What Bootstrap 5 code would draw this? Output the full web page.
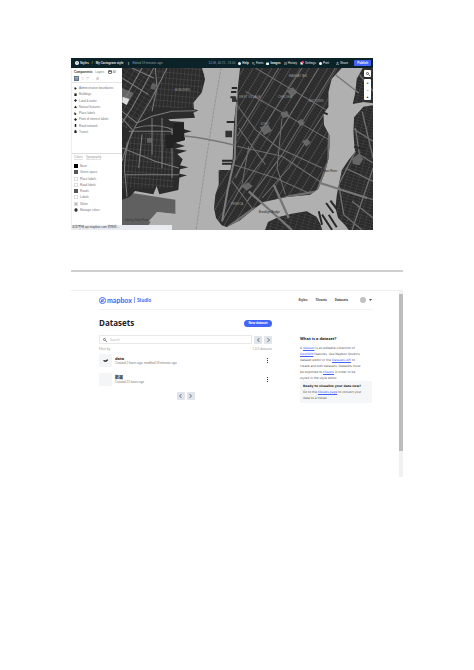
<!DOCTYPE html>
<html lang="en">
<head>
<meta charset="utf-8">
<meta name="viewport" content="width=device-width, initial-scale=1">
<title>Mapbox Studio</title>
<link href="https://cdn.jsdelivr.net/npm/bootstrap@5.3.0/dist/css/bootstrap.min.css" rel="stylesheet">
<style>
body{font-family:"Liberation Sans","Noto Sans CJK SC",sans-serif;font-size:3px;line-height:4px;color:#333;background:#fff}
.page{padding:58px 71px}
svg{display:block;flex:none}
button,input{font-family:inherit;font-size:3px;line-height:4px;border:0;padding:0;margin:0;background:none;color:inherit}
a{color:inherit;text-decoration:none}
.editor{width:91%}
.topbar{height:10px;background:#0b2229;color:#e4eaec;padding:0 2px 0 4px;white-space:nowrap}
.topbar .muted{color:#8fa3a9}
.topbar button,.topbar a{gap:1px}
.tools{gap:3px}
.publish{background:#4264fb!important;color:#fff;border-radius:1px;width:17px;height:6px;font-weight:bold;margin-left:3px!important}
.side{width:51px;flex:none;border-left:1px solid #eee;color:#777;background:#fff}
.tabs{height:7px;padding:0 2px;gap:3px;white-space:nowrap}
.tabs button:first-child{color:#333;font-weight:bold}
.tabs button:last-child{gap:1px}
.filters{height:8px;padding:0 2px;gap:2px;border-bottom:1px solid #e6e6e6}
.filters button{width:3px;height:5px}
.filters .on{width:5px;background:#607888;color:#fff}
.rows{height:50px;padding:0 2px;margin:2px 0 0}
.rows li{gap:2px;white-space:nowrap}
.layers{margin-bottom:18px}
.colours{border-top:1px solid #ddd;padding:0 2px;height:8px;gap:3px;color:#999}
.colours span{border-bottom:1px solid #e2e2e2}
.swatch{width:4px;height:4px;border:1px solid #ddd;flex:none}
.s1,.s2,.s5{border:0}.s1{background:#000}.s2,.s5{background:#555}.s7{background:#bbb}
.mapbox{min-width:0;height:162px;background:#b0b0b0}
.mapbox>svg{width:100%;height:100%}
.mapctl{right:2px;top:2px;width:7px;gap:2px}
.mapctl>*{background:#fff;border-radius:1px}
.mapctl button{height:7px;font-weight:bold;color:#222}
.status{left:0;bottom:0;width:101px;height:5px;background:#e9ebf1;color:#444;padding:0 1px;line-height:5px}
.rule{height:2px;background:#cfcfcf;margin:40px 0 18px}
.studio{border-top:1px solid #f0f0f0;height:187px;font-family:"Open Sans","Noto Sans CJK SC",sans-serif}
.wrapx{padding:0 27px 0 28px}
.head{height:19px;border-bottom:1px solid #f3f3f3}
.brand{color:#4264fb;font-family:Lato,sans-serif;font-size:7px;line-height:8px;font-weight:bold;gap:1px}
.brand .sub{font-size:5px;border-left:1px solid #8fa0f2;padding-left:2px;margin-left:1px;line-height:6px}
.links{gap:8px;font-weight:bold;color:#444}
.avatar{width:6px;height:6px;border-radius:50%;background:#c2c2c2;margin-left:4px}
.user{gap:3px}
.split{gap:28px}
.listcol{flex:1 1 0;min-width:0}
.infocol{width:72px;flex:none;padding-top:26px;font-family:"DejaVu Sans",sans-serif;color:#555}
h1{font-size:8px;line-height:10px;font-weight:700;color:#1b2028;margin:0}
.newbtn{background:#4264fb!important;color:#fff;border-radius:4px;width:28px;height:7px;font-weight:bold}
.toprow{padding-top:8px;height:18px}
.searchrow{margin-top:7px;gap:2px}
.searchbox{border:1px solid #e8e8e8;border-radius:1px;height:9px;padding:0 3px;gap:3px}
.searchbox input{outline:0;width:100%}
.searchbox input::placeholder{color:#aaa;opacity:1}
.sq{width:8px;height:8px;background:#dfe5eb!important;border-radius:1px;color:#5c6670;display:grid;place-items:center}
.meta{color:#888;height:10px;padding-top:3px}
.item{height:13px;gap:3px;margin-bottom:6px;padding-right:2px}
.thumb{width:13px;height:13px;background:#f4f5f7;border-radius:1px;display:grid;place-items:center}
.item .name{font-size:4px;line-height:5px;font-weight:bold;color:#222}
.item p{color:#777;font-family:"Liberation Sans",sans-serif}
.pager{gap:2px}
h2{font-family:"Open Sans",sans-serif;font-size:4px;line-height:5px;font-weight:700;color:#222;margin:0 0 4px}
.infocol p{margin:0;line-height:6px;white-space:nowrap}
.infocol a{color:#4264fb;text-decoration:underline}
.note{background:#f5f6f7;padding:2px 3px;margin:0}
.note b{color:#222}
.scroll{width:4px;background:#f1f1f1;flex:none;padding:3px 0 26px}
.scroll div{width:4px;background:#bdbdbd}
</style>
</head>
<body>
<main class="page">
<section class="editor">
<header class="topbar d-flex align-items-center justify-content-between">
  <div class="d-flex align-items-center tools">
    <a href="#" class="d-flex align-items-center"><svg width="4" height="4" viewBox="0 0 8 8"><circle cx="4" cy="4" r="4" fill="#fff"/><path d="M3 5V3.500L5 2.500 5.500 4Z" fill="#0b2229"/></svg><b>Styles</b></a>
    <span>/</span><b>My Cartogram style</b><b>⋮</b><span class="muted">Edited 19 minutes ago</span>
  </div>
  <div class="d-flex align-items-center tools">
    <span class="muted">12.09, 40.72, -74.00</span>
    <button class="d-flex align-items-center"><svg width="3" height="3" viewBox="0 0 8 8"><circle cx="4" cy="4" r="4" fill="#fff"/></svg><b>Help</b></button>
    <button class="d-flex align-items-center"><svg width="3" height="3" viewBox="0 0 8 8" fill="none" stroke="#fff"><circle cx="3" cy="3" r="2.500"/><path d="M5 5l3 3"/></svg>Fonts</button>
    <button class="d-flex align-items-center"><svg width="3" height="3" viewBox="0 0 8 8"><rect y="1" width="8" height="7" rx="2" fill="#fff"/></svg><b>Images</b></button>
    <button class="d-flex align-items-center"><svg width="3" height="3" viewBox="0 0 8 8" fill="none" stroke="#fff"><circle cx="4" cy="4" r="3.500"/><path d="M4 2v2h2"/></svg>History</button>
    <button class="d-flex align-items-center"><svg width="4" height="4" viewBox="0 0 8 8"><path d="M1 2h5v5H1z" fill="#fff"/><circle cx="5.500" cy="2.500" r="2.500" fill="#f04468"/></svg>Settings</button>
    <button class="d-flex align-items-center"><svg width="3" height="3" viewBox="0 0 8 8"><circle cx="4" cy="4" r="4" fill="#fff"/></svg>Print</button>
    <button class="d-flex align-items-center ms-1"><svg width="3" height="3" viewBox="0 0 8 8" fill="none" stroke="#fff"><path d="M1 4v4h6V4M4 6V0M2 2l2-2 2 2"/></svg>Share</button>
    <button class="publish">Publish</button>
  </div>
</header>
<div class="d-flex position-relative">
  <aside class="side">
    <div class="tabs d-flex align-items-center"><button>Components</button><button>Layers</button><button class="d-flex align-items-center ms-auto me-1"><svg width="4" height="4" viewBox="0 0 8 8" fill="none" stroke="#444" stroke-width="1.500"><rect x="1" y="1" width="6" height="6" rx="1"/><path d="M1 3h6"/></svg>All</button></div>
    <div class="filters d-flex align-items-center"><button class="on">▦</button><button>◇</button><button>▽</button><button>◌</button><button>⊕</button></div>
    <ul class="rows layers list-unstyled d-flex flex-column justify-content-around" id="layers"></ul>
    <div class="colours d-flex align-items-center"><span>Colors</span><span>Typography</span></div>
    <ul class="rows list-unstyled d-flex flex-column justify-content-around" id="colours"></ul>
  </aside>
  <div class="mapbox flex-fill position-relative">
    <svg viewBox="0 0 753 486" preserveAspectRatio="none" role="img" aria-label="Map of Manhattan">
      <defs>
        <pattern id="gNJ" width="11" height="17" patternUnits="userSpaceOnUse" patternTransform="rotate(5)"><path d="M0 0H11M0 0V17" fill="none" stroke="#5c5c5c" stroke-width="2"/></pattern>
        <pattern id="gJC" width="17" height="13" patternUnits="userSpaceOnUse" patternTransform="rotate(32)"><path d="M0 0H17M0 0V13" fill="none" stroke="#545454" stroke-width="2"/></pattern>
        <pattern id="gMN" width="24" height="8" patternUnits="userSpaceOnUse" patternTransform="rotate(31)"><path d="M0 0H24" stroke="#4c4c4c" stroke-width="1.500"/><path d="M0 0V8" stroke="#666" stroke-width="3"/></pattern>
        <pattern id="gBK" width="18" height="9" patternUnits="userSpaceOnUse" patternTransform="rotate(16)"><path d="M0 0H18M0 0V9" fill="none" stroke="#505050" stroke-width="2"/></pattern>
        <path id="nj" d="M0 0H240L249 34 239 74 226 89 214 104 216 124 229 127 214 134 219 149 139 154 144 159 186 162V184L209 190 186 196 189 216 159 224 189 234 159 242 195 248 166 258 182 274 174 292 199 298 174 304 172 317 195 322 172 329 169 366 112 379 104 354 94 379 39 369 24 386 0 395Z"/>
        <path id="mn" d="M354 0H659L629 32 619 72 619 117 604 137 606 172 622 202 622 237 619 272 609 312 589 362 564 380 494 387 424 402 384 432 354 457 314 477 299 472 282 450 276 420 280 380 290 350 290 306 325 306 332 270 336 162Z"/>
        <path id="bk" d="M753 0H722L704 32 699 77 692 108 724 102 753 106V112L724 116 696 148 694 190 696 222 699 252 679 277 659 307 652 342 644 382 640 420 648 450 668 470 680 486H753Z"/>
        <path id="bs" d="M429 486L438 462 470 447 509 437 554 430 584 447 596 470 600 486Z"/>
        <clipPath id="cn"><use href="#nj"/></clipPath><clipPath id="cm"><use href="#mn"/></clipPath><clipPath id="cb"><use href="#bk"/></clipPath>
      </defs>
      <rect width="753" height="486" fill="#b0b0b0"/>
      <path d="M0 388L30 375 160 395V438L105 432 80 460 120 470 60 486H0Z" fill="#606060"/>
      <path d="M160 438L105 432 70 486H160Z" fill="#b0b0b0"/>
      <g fill="#2b2b2b"><use href="#nj"/><use href="#mn"/><use href="#bk"/><use href="#bs"/></g>
      <use href="#bs" fill="url(#gBK)"/>
      <g clip-path="url(#cn)" fill="none">
        <path d="M105 0H240V120H90Z" fill="url(#gNJ)"/><path d="M0 0H105L90 120 30 180H0Z" fill="url(#gJC)"/><path d="M30 195H155V360H0V240Z" fill="url(#gNJ)"/>
        <path d="M0 60L35 75 15 110 0 100Z" fill="#666"/><path d="M2 86l20 7-8 18-14-8Z" fill="#ddd"/>
        <path d="M90 45l14 4-5 17-14-4zM75 210h15v14H75z" fill="#606060"/>
        <g stroke="#7c7c7c" stroke-width="3">
          <path d="M135 0L90 90 40 175 15 230 0 280M95 0L30 120 0 165M60 0L10 90M0 130L45 165 90 145 150 130 220 128M0 150L35 190M20 190H140L190 205M40 180Q90 165 140 180L170 200M30 190Q0 270 10 330L15 386M0 240L100 280 170 300M60 200L50 300M120 150V300M90 150V260M10 320H170M100 0L105 60 90 130M0 30L80 80M30 0L95 30M150 180V330"/>
        </g>
        <path d="M153 165h35v60h-35zM130 200h25v40h-25z" fill="#222"/>
      </g>
      <g clip-path="url(#cm)" fill="none">
        <use href="#mn" fill="url(#gMN)"/>
        <path d="M494 70l18-12 14 14-16 16zM475 135l20-7 7 17-20 6zM413 178l25-8 12 18-24 14zM525 160l14-8 8 14-12 9zM540 220l16-8 10 12-14 12zM358 355l20-12 14 12-18 13z" fill="#666"/>
        <g stroke="#6e6e6e" stroke-width="3">
          <path d="M470 0L345 205M540 0L390 230 340 330M590 0L425 270 350 370M640 0L480 260 375 400M610 130L500 300 420 390M340 105L400 185 470 240 600 300M370 70L620 215M400 0L620 130M345 235L480 265 600 345M335 290L460 330 560 375M330 340L390 420M380 235L360 350 300 460M480 150L465 300 490 380M350 180L430 290"/>
        </g>
        <path d="M345 60L338 270 318 360 300 460" stroke="#7c7c7c" stroke-width="6"/><path d="M622 160L619 280 585 370 500 385 390 425 320 475" stroke="#707070" stroke-width="7"/>
      </g>
      <g clip-path="url(#cb)" fill="none"><use href="#bk" fill="url(#gBK)"/>
        <path d="M712 20L753 70M690 180L753 220M720 130L753 270M700 250L650 350 665 440 720 486M640 360L753 395M753 300L690 486M670 300L753 340M690 400L753 450M700 180L712 260 753 285" stroke="#6e6e6e" stroke-width="4"/>
        <path d="M690 272l18-14 16 14-12 20-20-4z" fill="#666"/>
      </g>
      <g fill="none" stroke="#777">
        <path d="M186 204Q250 210 335 231" stroke-width="5"/><path d="M640 20L710 75" stroke-width="4"/><path d="M594 345L735 390" stroke-width="7"/><path d="M380 370L510 486M455 350L500 450" stroke-width="7"/>
      </g>
      <g stroke="#292929" stroke-width="6"><path d="M329 60h16M327 72h16M325 88h16M330 98h16M314 162h24M300 278h30M300 287h30M246 20h-10M603 133l14 6M696 236l30 8M612 405l22 30M625 398l18 24M600 440l30 46M620 440l24 38M590 430l10 40"/></g>
      <path d="M310 188h20v20h-20zM330 88h12v12h-12z" fill="#333"/>
      <path d="M297 0L278 110 255 260 222 486" fill="none" stroke="#858585" stroke-width="2" stroke-dasharray="9 3"/>
      <g font-family="Liberation Sans" font-size="9" fill="#999"><text x="158" y="68">HOBOKEN</text><text x="500" y="28">MANHATTAN</text><text x="468" y="90">CHELSEA</text><text x="560" y="102">MIDTOWN</text><text x="350" y="90">WEST VILLAGE</text><text x="415" y="171">SOHO</text><text x="325" y="410">TRIBECA</text><text x="8" y="460" fill="#333">Liberty State Park</text><text x="604" y="313" fill="#222">East River</text><text x="410" y="434" fill="#222">Brooklyn Bridge</text></g>
    </svg>
    <div class="mapctl position-absolute d-flex flex-column"><button aria-label="Search"><svg class="mx-auto" width="4" height="4" viewBox="0 0 8 8" fill="none" stroke="#333" stroke-width="1.500"><circle cx="3" cy="3" r="2"/><path d="M5 5l3 3"/></svg></button><div class="d-flex flex-column"><button>+</button><button>−</button><button>▲</button></div></div>
  </div>
  <div class="status position-absolute">正在等待 api.mapbox.com 的响应...</div>
</div>
</section>
<div class="rule"></div>
<section class="studio d-flex">
  <div class="wrapx flex-fill">
    <header class="head d-flex align-items-center justify-content-between">
      <a href="#" class="brand d-flex align-items-center"><svg width="7" height="7" viewBox="0 0 14 14"><circle cx="7" cy="7" r="6" fill="none" stroke="#4264fb" stroke-width="2"/><path d="M4 10Q3 5 8 4q3 0 2 4-2 3-6 2z" fill="#4264fb"/><path d="M8 5l.6 1.400L10 7l-1.400.6L8 9l-.6-1.400L6 7l1.400-.6z" fill="#fff"/></svg>mapbox<span class="sub">Studio</span></a>
      <nav class="links d-flex align-items-center"><a href="#">Styles</a><a href="#">Tilesets</a><a href="#">Datasets</a><span class="user d-flex align-items-center"><span class="avatar"></span><svg width="3" height="2" viewBox="0 0 6 4"><path d="M0 0h6L3 4z" fill="#555"/></svg></span></nav>
    </header>
    <div class="split d-flex">
      <div class="listcol">
        <div class="toprow d-flex justify-content-between align-items-center"><h1>Datasets</h1><button class="newbtn">New dataset</button></div>
        <div class="searchrow d-flex align-items-center">
          <label class="searchbox d-flex align-items-center flex-fill"><svg width="4" height="4" viewBox="0 0 8 8" fill="none" stroke="#555" stroke-width="1.500"><circle cx="3" cy="3" r="2"/><path d="M5 5l3 3"/></svg><input type="text" placeholder="Search" aria-label="Search"></label>
          <button class="sq" aria-label="Previous"><svg width="3" height="4" viewBox="0 0 3 4" fill="none" stroke="#66707a"><path d="M2.500 0l-2 2 2 2"/></svg></button><button class="sq" aria-label="Next"><svg width="3" height="4" viewBox="0 0 3 4" fill="none" stroke="#66707a"><path d="M.5 0l2 2-2 2"/></svg></button>
        </div>
        <div class="meta d-flex justify-content-between"><span>Filter by</span><span>1-2/2 datasets</span></div>
        <div class="item d-flex align-items-center"><div class="thumb"><svg width="5" height="3" viewBox="0 0 10 6"><path d="M0 3l3-1 2 1 4-3 1 3-4 3-4-1z" fill="#333"/></svg></div><div class="flex-fill"><div class="name">data</div><p class="m-0">Created 2 hours ago, modified 19 minutes ago</p></div><button aria-label="Menu"><svg width="4" height="5" viewBox="0 0 4 5"><path d="M1 0h1v1H1zM1 2h1v1H1zM1 4h1v1H1z" fill="#333"/></svg></button></div>
        <div class="item d-flex align-items-center"><div class="thumb"></div><div class="flex-fill"><div class="name">数据</div><p class="m-0">Created 21 hours ago</p></div><button aria-label="Menu"><svg width="4" height="5" viewBox="0 0 4 5"><path d="M1 0h1v1H1zM1 2h1v1H1zM1 4h1v1H1z" fill="#333"/></svg></button></div>
        <div class="pager d-flex justify-content-center"><button class="sq" aria-label="Previous page"><svg width="3" height="4" viewBox="0 0 3 4" fill="none" stroke="#66707a"><path d="M2.500 0l-2 2 2 2"/></svg></button><button class="sq" aria-label="Next page"><svg width="3" height="4" viewBox="0 0 3 4" fill="none" stroke="#66707a"><path d="M.5 0l2 2-2 2"/></svg></button></div>
      </div>
      <aside class="infocol">
        <h2>What is a dataset?</h2>
        <p>A <a href="#">dataset</a> is an editable collection of<br><a href="#">GeoJSON</a> features. Use Mapbox Studio's<br>dataset editor or the <a href="#">Datasets API</a> to<br>create and edit datasets. Datasets must<br>be exported to <a href="#">tilesets</a> in order to be<br>styled in the style editor.</p>
        <div class="note"><p><b>Ready to visualize your data now?</b><br>Go to the <a href="#">tilesets page</a> to convert your<br>data to a tileset.</p></div>
      </aside>
    </div>
  </div>
  <div class="scroll d-flex"><div></div></div>
</section>
</main>
<script src="https://cdn.jsdelivr.net/npm/bootstrap@5.3.0/dist/js/bootstrap.bundle.min.js"></script>
<script>
const shapes=['M1 1h4l2 3-3 3-3-2z','M1 1h6v7H1z','M0 4l4-4 4 4-4 4z','M0 8l4-7 4 7z','M1 0l6 5-3 3-3-1z','M4 0l4 4-4 4-4-4z','M2 0h4v8H2z','M1 2l3-2 3 2v6H1z'];
document.getElementById('layers').innerHTML=['Administrative boundaries','Buildings','Land & water','Natural features','Place labels','Point of interest labels','Road network','Transit'].map((t,i)=>`<li class="d-flex align-items-center"><svg width="3" height="3" viewBox="0 0 8 8"><path d="${shapes[i]}" fill="#222"/></svg>${t.replace('&','&amp;')}</li>`).join('');
document.getElementById('colours').innerHTML=['Base','Green space','Place labels','Road labels','Roads','Labels','Water','Manage colors'].map((t,i)=>`<li class="d-flex align-items-center">${i<7?`<span class="swatch s${i+1}"></span>`:'<svg width="4" height="4" viewBox="0 0 8 8"><path d="M4 0l3 2v4L4 8 1 6V2z" fill="#333"/></svg>'}${t}</li>`).join('');
</script>
</body>
</html>
